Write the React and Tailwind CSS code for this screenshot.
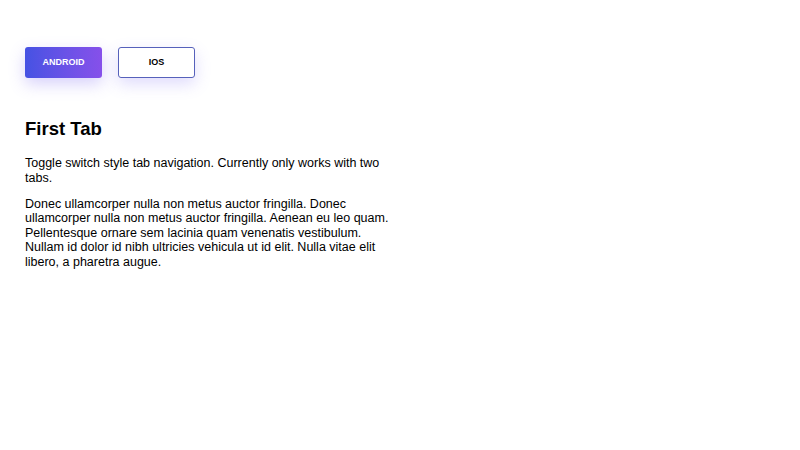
import React, { useState } from 'react';

const tabs = [
  { id: 'android', label: 'Android' },
  { id: 'ios', label: 'iOS' },
];

const App = () => {
  const [active, setActive] = useState('android');

  return (
    <div className="min-h-screen bg-white px-[25px] pt-[47px] text-black" style={{ fontFamily: '"Liberation Sans", Arial, sans-serif' }}>
      <div className="flex gap-4">
        {tabs.map((tab) => (
          <button
            key={tab.id}
            onClick={() => setActive(tab.id)}
            className={
              active === tab.id
                ? 'h-[31px] w-[77px] rounded-[3px] bg-gradient-to-r from-[#4552e3] to-[#8650ea] text-[9px] font-bold uppercase text-white shadow-[0_6px_16px_rgba(110,90,240,0.28)]'
                : 'h-[31px] w-[77px] rounded-[3px] border-[1.5px] border-[#5661bb] bg-white text-[9px] font-bold uppercase text-black shadow-[0_6px_16px_rgba(110,90,240,0.22)]'
            }
          >
            {tab.label}
          </button>
        ))}
      </div>

      <div className="mt-[39px] w-[370px]">
        <h2 className="text-[18.5px] font-bold leading-[24px]">First Tab</h2>
        <p className="mt-[15px] text-[12.5px] leading-[14.6px]">
          Toggle switch style tab navigation. Currently only works with two tabs.
        </p>
        <p className="mt-[11.5px] text-[12.5px] leading-[14.6px]">
          Donec ullamcorper nulla non metus auctor fringilla. Donec ullamcorper nulla non metus auctor fringilla. Aenean eu leo quam. Pellentesque ornare sem lacinia quam venenatis vestibulum. Nullam id dolor id nibh ultricies vehicula ut id elit. Nulla vitae elit libero, a pharetra augue.
        </p>
      </div>
    </div>
  );
};

export default App;
